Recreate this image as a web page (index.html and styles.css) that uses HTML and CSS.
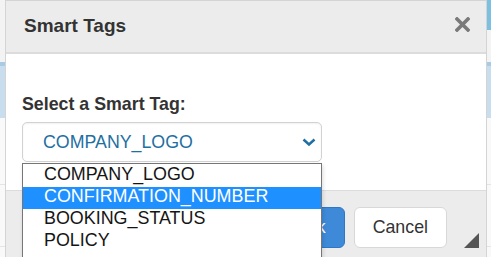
FILE: index.html
```html
<!DOCTYPE html>
<html>
<head>
<meta charset="utf-8">
<link rel="stylesheet" href="styles.css">
</head>
<body>
<div class="page">
  <div class="bg-top"></div>
  <div class="bg-line"></div>
  <div class="bg-band"></div>
  <div class="bg-rest"></div>
</div>
<div class="dialog">
  <div class="header">
    <span class="title">Smart Tags</span>
    <svg class="close" width="15" height="15" viewBox="0 0 15 15"><path d="M2 2L13 13M13 2L2 13" stroke="#7a7a7a" stroke-width="3.6" stroke-linecap="square"/></svg>
  </div>
  <div class="body">
    <div class="label">Select a Smart Tag:</div>
    <div class="select">
      <span class="value">COMPANY_LOGO</span>
      <svg class="chev" width="14" height="8" viewBox="0 0 14 8"><polyline points="1.5,1.5 7,6.5 12.5,1.5" fill="none" stroke="#1f6fa3" stroke-width="2.5"/></svg>
      <ul class="dropdown">
        <li>COMPANY_LOGO</li>
        <li class="active">CONFIRMATION_NUMBER</li>
        <li>BOOKING_STATUS</li>
        <li>POLICY</li>
      </ul>
    </div>
  </div>
  <div class="footer">
    <button class="btn btn-ok">Ok</button>
    <button class="btn btn-cancel">Cancel</button>
  </div>
  <div class="handle"></div>
</div>
</body>
</html>
```
FILE: styles.css
```css
html, body {
  margin: 0;
  padding: 0;
}
body {
  width: 491px;
  height: 257px;
  overflow: hidden;
  position: relative;
  font-family: "Liberation Sans", Arial, sans-serif;
  background: #f7f7f7;
}
.page {
  display: flex;
  flex-direction: column;
  height: 257px;
}
.bg-top {
  height: 62px;
  background: linear-gradient(#7bbfe1, #7bbfe1) right top / 5px 30px no-repeat, #f3f3f3;
}
.bg-line {
  height: 4px;
  background: #a8cbe5;
}
.bg-band {
  height: 52px;
  background: #c8ddee;
}
.bg-rest {
  flex: 1;
  background: linear-gradient(#e4e4e4, #e4e4e4) left 128px / 100% 1px no-repeat,
              linear-gradient(#e4e4e4, #e4e4e4) left 66px / 100% 1px no-repeat,
              #f9f9f9;
}
.dialog {
  position: absolute;
  left: 5px;
  top: 0;
  width: 482px;
  height: 275px;
  box-sizing: border-box;
  border: 1px solid #d4d4d4;
  background: #fff;
  display: flex;
  flex-direction: column;
}
.header {
  height: 51px;
  flex: none;
  background: #ececec;
  border-bottom: 2px solid #dcdcdc;
  display: flex;
  align-items: center;
  justify-content: space-between;
  padding: 0 16px 0 18px;
}
.title {
  font-size: 19px;
  font-weight: bold;
  color: #333;
  margin-bottom: 2px;
}
.close {
  margin-bottom: 4px;
}
.body {
  height: 136px;
  flex: none;
  padding: 40px 0 0 16px;
  box-sizing: border-box;
}
.label {
  font-size: 17.8px;
  line-height: 20px;
  font-weight: bold;
  color: #333;
  margin-bottom: 8px;
}
.select {
  position: relative;
  width: 300px;
  height: 40px;
  box-sizing: border-box;
  border: 1px solid #d2d2d2;
  border-radius: 5px;
  box-shadow: inset 0 1px 2px rgba(0,0,0,0.06);
  display: flex;
  align-items: center;
  justify-content: space-between;
  padding: 0 5px 0 20px;
}
.value {
  font-size: 17.8px;
  color: #1f6fa3;
}
.dropdown {
  position: absolute;
  left: -1px;
  top: 40px;
  width: 300px;
  height: 110px;
  box-sizing: border-box;
  margin: 0;
  padding: 1px 0 0;
  list-style: none;
  background: #fff;
  border: 1px solid #767676;
  box-shadow: 1px 2px 4px rgba(0,0,0,0.14);
  z-index: 5;
}
.dropdown li {
  height: 22px;
  box-sizing: border-box;
  padding: 0 0 3px 21px;
  font-size: 17.9px;
  line-height: 19px;
  color: #151515;
}
.dropdown li.active {
  background: #1e90ff;
  color: #fff;
}
.footer {
  flex: 1;
  background: #ececec;
  border-top: 1px solid #dcdcdc;
  display: flex;
  justify-content: flex-end;
  align-items: flex-start;
  gap: 9px;
  padding: 16px 39px 0 0;
}
.btn {
  height: 41px;
  padding: 0 18px;
  font-family: "Liberation Sans", Arial, sans-serif;
  font-size: 17.8px;
  border-radius: 6px;
  border: 1px solid #ccc;
}
.btn-ok {
  background: #3f8ad8;
  border-color: #2f76c8;
  color: #fff;
}
.btn-cancel {
  background: #fff;
  color: #333;
  border-color: #d8d8d8;
}
.handle {
  position: absolute;
  right: 7px;
  top: 232px;
  width: 0;
  height: 0;
  border-style: solid;
  border-width: 0 0 15px 15px;
  border-color: transparent transparent #555 transparent;
}
```
